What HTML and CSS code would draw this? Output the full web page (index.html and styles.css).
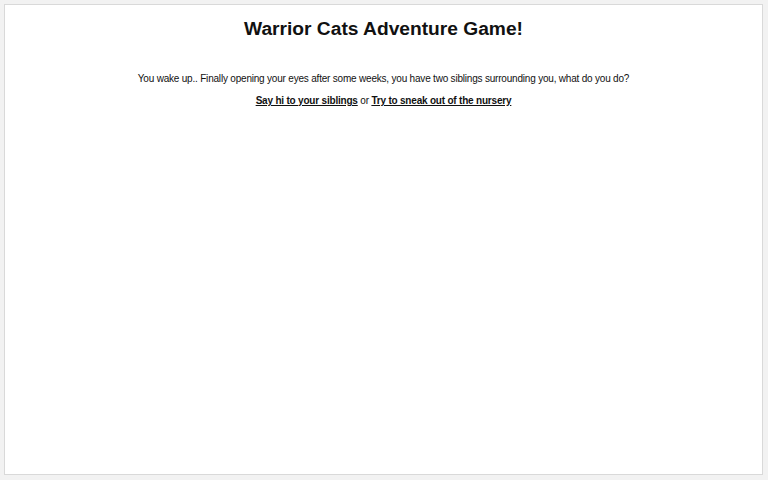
FILE: index.html
```html
<!DOCTYPE html>
<html lang="en">
<head>
<meta charset="utf-8">
<title>Warrior Cats Adventure Game!</title>
<link rel="stylesheet" href="styles.css">
</head>
<body>

<section id="game">
    <h1>Warrior Cats Adventure Game!</h1>

    <div id="story">
        <p>You wake up.. Finally opening your eyes after some weeks, you have two siblings surrounding you, what do you do?</p>
        <p class="choices">
            <a href="#" class="choice">Say hi to your siblings</a> or
            <a href="#" class="choice">Try to sneak out of the nursery</a>
        </p>
    </div>
</section>

</body>
</html>
```

FILE: styles.css
```css
html, body {
    height: 100%;
}
body {
    margin: 0;
    padding: 4px 5px 5px 4px;
    box-sizing: border-box;
    background: #f2f2f2;
    font: normal 10px/14px "Liberation Sans", Arial, sans-serif;
    letter-spacing: -0.2px;
    color: #111;
}

#game {
    height: 100%;
    box-sizing: border-box;
    background: #fff;
    border: 1px solid #d9d9d9;
    text-align: center;
    padding-top: 13px;
}

#game h1 {
    font-size: 19.2px;
    line-height: 22px;
    letter-spacing: 0;
    margin: 0 0 32px 0;
}

#story p {
    margin: 0 0 8px 0;
}

.choice {
    color: #111;
    font-weight: bold;
}
```
